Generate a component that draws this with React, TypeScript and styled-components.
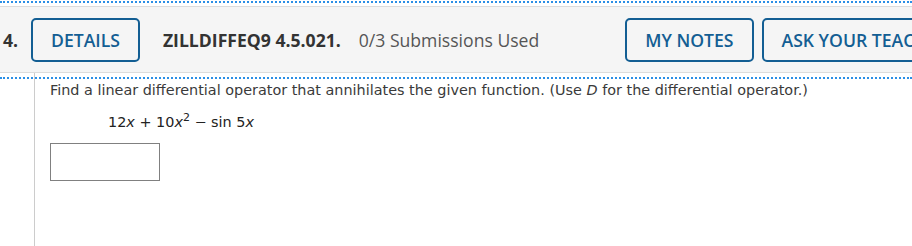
import styled, { createGlobalStyle } from 'styled-components';

const GlobalStyle = createGlobalStyle`
  html, body {
    margin: 0;
    padding: 0;
    background: #ffffff;
  }
  body {
    font-family: "Open Sans", "Liberation Sans", sans-serif;
    overflow: hidden;
  }
`;

const Page = styled.div`
  width: 912px;
  height: 246px;
  padding-top: 1px;
  box-sizing: border-box;
  overflow: hidden;
`;

const FocusLine = styled.div<{ $top?: number }>`
  height: 0;
  margin-top: ${p => p.$top ?? 0}px;
  border-top: 2px dotted #2b8fe6;
`;

const Header = styled.div`
  margin-top: 3px;
  height: 65px;
  background: #f5f5f5;
  border-top: 1px solid #dcdcdc;
  border-bottom: 1px solid #dcdcdc;
  display: flex;
  align-items: center;
  white-space: nowrap;
  overflow: hidden;
`;

const Number = styled.span`
  flex-shrink: 0;
  width: 16px;
  margin-left: 3px;
  font-size: 17.6px;
  font-weight: 700;
  color: #333333;
`;

const OutlineButton = styled.button<{ $gap?: number }>`
  flex-shrink: 0;
  height: 44px;
  margin-left: ${p => p.$gap ?? 0}px;
  padding: 0 18px;
  border: 2px solid #135e93;
  border-radius: 5px;
  background: #f5f5f5;
  color: #135e93;
  font-family: "Open Sans", "Liberation Sans", sans-serif;
  font-size: 17.6px;
  font-weight: 600;
  cursor: pointer;
`;

const Code = styled.span`
  flex-shrink: 0;
  margin-left: 23px;
  font-size: 17.6px;
  font-weight: 700;
  color: #333333;
`;

const Used = styled.span`
  flex-shrink: 0;
  margin-left: 18px;
  font-size: 17.6px;
  color: #555555;
`;

const Body = styled.div`
  display: flex;
  height: 200px;
`;

const Gutter = styled.div`
  width: 34px;
  flex-shrink: 0;
  border-right: 1px solid #cccccc;
  margin-top: -6px;
`;

const Content = styled.div`
  flex: 1;
  display: flex;
  flex-direction: column;
  padding-left: 15px;
`;

const Prompt = styled.p`
  margin: 2px 0 0;
  font-family: "DejaVu Sans", Verdana, sans-serif;
  font-size: 14.4px;
  line-height: 18px;
  color: #3a3a3a;
`;

const MathLine = styled.div`
  margin: 14px 0 0 58px;
  font-family: "DejaVu Sans", Verdana, sans-serif;
  font-size: 14.4px;
  line-height: 18px;
  color: #222222;

  sup {
    font-size: 11px;
    line-height: 0;
  }
`;

const AnswerBox = styled.input`
  margin-top: 12px;
  width: 110px;
  height: 38px;
  box-sizing: border-box;
  border: 1px solid #808080;
  outline: none;
  background: #ffffff;
`;

export default function App() {
  return (
    <Page>
      <GlobalStyle />
      <FocusLine />
      <Header>
        <Number>4.</Number>
        <OutlineButton $gap={12}>DETAILS</OutlineButton>
        <Code>ZILLDIFFEQ9 4.5.021.</Code>
        <Used>0/3 Submissions Used</Used>
        <OutlineButton $gap={86}>MY NOTES</OutlineButton>
        <OutlineButton $gap={8}>ASK YOUR TEACHER</OutlineButton>
      </Header>
      <FocusLine $top={4} />
      <Body>
        <Gutter />
        <Content>
          <Prompt>
            Find a linear differential operator that annihilates the given function. (Use <i>D</i> for
            the differential operator.)
          </Prompt>
          <MathLine>
            12<i>x</i> + 10<i>x</i>
            <sup>2</sup> − sin 5<i>x</i>
          </MathLine>
          <AnswerBox type="text" />
        </Content>
      </Body>
    </Page>
  );
}
